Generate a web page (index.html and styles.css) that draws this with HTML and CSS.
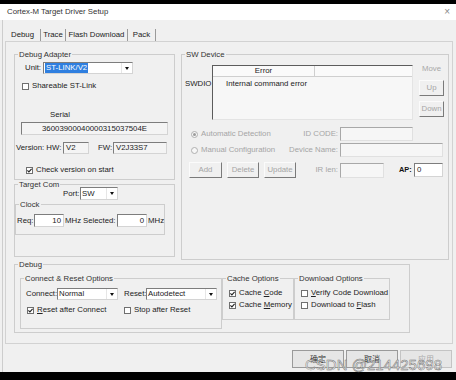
FILE: index.html
```html
<!DOCTYPE html>
<html>
<head>
<meta charset="utf-8">
<title>Cortex-M Target Driver Setup</title>
<link rel="stylesheet" href="styles.css">
</head>
<body>
<div class="dialog">
  <div class="titlebar"><span class="title">Cortex-M Target Driver Setup</span><span class="close">×</span></div>
  <div class="main">
    <div class="tabs">
      <span class="tab t-debug">Debug</span><span class="tab t-trace">Trace</span><span class="tab t-flash">Flash Download</span><span class="tab t-pack">Pack</span>
    </div>
    <div class="panel">
      <div class="toprow">
        <div class="leftcol">
          <fieldset class="grp g-adapter">
            <legend>Debug Adapter</legend>
            <div class="row r-unit">
              <span class="lbl w-unit">Unit:</span>
              <span class="select s-unit"><span class="sel-text"><span class="hl">ST-LINK/V2</span></span><span class="arrow"><span class="tri"></span></span></span>
            </div>
            <div class="row r-share">
              <span class="cb"></span><span class="cbl">Shareable ST-Link</span>
            </div>
            <div class="row r-serlbl">Serial</div>
            <div class="box serial">3600390004000031503750​4E</div>
            <div class="row r-version">
              <span class="lbl w-ver">Version: HW:</span>
              <span class="box ro hw">V2</span>
              <span class="lbl w-fw">FW:</span>
              <span class="box ro fw">V2J33S7</span>
            </div>
            <div class="row r-check">
              <span class="cb"><svg width="5" height="5" viewBox="0 0 5 5"><path d="M0.4 2.4 L1.9 3.9 L4.6 0.8" fill="none" stroke="#222" stroke-width="1.1"/></svg></span><span class="cbl">Check version on start</span>
            </div>
          </fieldset>
          <fieldset class="grp g-target">
            <legend>Target Com</legend>
            <div class="row r-port">
              <span class="lbl w-port">Port:</span>
              <span class="select s-port"><span class="sel-text">SW</span><span class="arrow"><span class="tri"></span></span></span>
            </div>
            <fieldset class="grp g-clock">
              <legend>Clock</legend>
              <div class="row r-req">
                <span class="lbl w-req">Req:</span>
                <span class="box num">10</span>
                <span class="lbl w-mhz">MHz</span>
                <span class="lbl w-sel">Selected:</span>
                <span class="box num">0</span>
                <span class="lbl w-mhz2">MHz</span>
              </div>
            </fieldset>
          </fieldset>
        </div>
        <fieldset class="grp g-sw">
          <legend>SW Device</legend>
          <div class="swtop">
            <div class="swdio">SWDIO</div>
            <div class="tbl">
              <div class="thead"><span class="th th1">Error</span><span class="th th2"></span></div>
              <div class="trow">Internal command error</div>
            </div>
            <div class="movecol">
              <div class="move">Move</div>
              <div class="btn dis b-up">Up</div>
              <div class="btn dis b-down">Down</div>
            </div>
          </div>
          <div class="swrow sw1">
            <div class="swleft"><span class="radio on"></span><span class="dis-t rl">Automatic Detection</span><span class="dis-t rlab">ID CODE:</span></div>
            <span class="box dbox idc"></span>
          </div>
          <div class="swrow sw2">
            <div class="swleft"><span class="radio"></span><span class="dis-t rl">Manual Configuration</span><span class="dis-t rlab">Device Name:</span></div>
            <span class="box dbox devn"></span>
          </div>
          <div class="swrow sw3">
            <div class="swleft sw3left"><span class="btn dis b-add">Add</span><span class="btn dis b-del">Delete</span><span class="btn dis b-upd">Update</span><span class="dis-t rlab">IR len:</span></div>
            <span class="box dbox irl"></span>
            <span class="lbl ap">AP:</span>
            <span class="box apbox">0</span>
          </div>
        </fieldset>
      </div>
      <fieldset class="grp g-debug">
        <legend>Debug</legend>
        <div class="drow">
          <fieldset class="grp g-conn">
            <legend>Connect &amp; Reset Options</legend>
            <div class="row r-conn">
              <span class="lbl w-conn">Connect:</span>
              <span class="select s-conn"><span class="sel-text">Normal</span><span class="arrow"><span class="tri"></span></span></span>
              <span class="lbl w-reset">Reset:</span>
              <span class="select s-reset"><span class="sel-text">Autodetect</span><span class="arrow"><span class="tri"></span></span></span>
            </div>
            <div class="row r-rac">
              <span class="citem w-rac"><span class="cb"><svg width="5" height="5" viewBox="0 0 5 5"><path d="M0.4 2.4 L1.9 3.9 L4.6 0.8" fill="none" stroke="#222" stroke-width="1.1"/></svg></span><span class="cbl"><u>R</u>eset after Connect</span></span>
              <span class="citem"><span class="cb"></span><span class="cbl">Stop after Reset</span></span>
            </div>
          </fieldset>
          <fieldset class="grp g-cache">
            <legend>Cache Options</legend>
            <div class="row r-opt1"><span class="cb"><svg width="5" height="5" viewBox="0 0 5 5"><path d="M0.4 2.4 L1.9 3.9 L4.6 0.8" fill="none" stroke="#222" stroke-width="1.1"/></svg></span><span class="cbl">Cache <u>C</u>ode</span></div>
            <div class="row r-opt2"><span class="cb"><svg width="5" height="5" viewBox="0 0 5 5"><path d="M0.4 2.4 L1.9 3.9 L4.6 0.8" fill="none" stroke="#222" stroke-width="1.1"/></svg></span><span class="cbl">Cache <u>M</u>emory</span></div>
          </fieldset>
          <fieldset class="grp g-dl">
            <legend>Download Options</legend>
            <div class="row r-opt1"><span class="cb"></span><span class="cbl"><u>V</u>erify Code Download</span></div>
            <div class="row r-opt2"><span class="cb"></span><span class="cbl">Download to <u>F</u>lash</span></div>
          </fieldset>
        </div>
      </fieldset>
    </div>
    <div class="footer">
      <span class="fbtn">确定</span><span class="fbtn">取消</span><span class="fbtn fdis">应用</span>
    </div>
  </div>
</div>
<div class="watermark">CSDN @214425698</div>
</body>
</html>
```

FILE: styles.css
```css
* { box-sizing: border-box; }
html, body { margin: 0; padding: 0; }
body {
  width: 456px; height: 380px; background: #000; position: relative; overflow: hidden;
  font-family: "Liberation Sans", Arial, "Noto Sans CJK SC", sans-serif;
  font-size: 7.8px; line-height: 10px; color: #222;
}
.dialog { margin-top: 4px; height: 368px; background: #f0f0f0; display: flex; flex-direction: column; }
.titlebar { height: 16px; background: #fff; display: flex; align-items: center; justify-content: space-between; padding: 0 6px 0 7px; }
.title { font-size: 7.8px; color: #333; }
.close { font-size: 10px; color: #888; line-height: 10px; }
.main { flex: 1; margin-left: 2px; border-left: 1px solid #cdcdcd; padding: 9px 4px 0 0; display: flex; flex-direction: column; }

.tabs { display: flex; height: 12px; margin-left: 2px; }
.tab { display: flex; align-items: center; justify-content: center; border-right: 1px solid #9a9a9a; height: 12px; }
.t-debug { width: 36px; }
.t-trace { width: 25px; }
.t-flash { width: 62px; }
.t-pack { width: 28px; }

.panel { margin-left: 2px; width: 448px; height: 303px; border: 1px solid #d2d2d2; padding: 8px 3px 0 8px; }
.toprow { display: flex; gap: 6px; height: 210px; }
.leftcol { width: 161px; display: flex; flex-direction: column; }

fieldset.grp { margin: 0; padding: 0; border: 1px solid #cdcdcd; min-width: 0; }
legend { padding: 0 1px; margin-left: 3px; font-size: 7.8px; line-height: 9px; color: #333; }

.row { display: flex; align-items: center; white-space: nowrap; }
.lbl { white-space: nowrap; flex: none; }
.box { display: inline-flex; align-items: center; background: #fff; border: 1px solid; border-color: #7d7d7d #d4d4d4 #d4d4d4 #7d7d7d; flex: none; white-space: nowrap; }
.box.ro { background: #f4f4f4; padding-left: 2px; }
.select { display: inline-flex; height: 12px; background: #fff; border: 1px solid; border-color: #7d7d7d #d4d4d4 #d4d4d4 #7d7d7d; flex: none; }
.sel-text { flex: 1; display: flex; align-items: center; padding-left: 1px; overflow: hidden; }
.hl { background: #2f7fe0; color: #fff; padding: 0 1px; line-height: 10px; }
.arrow { width: 11px; display: flex; align-items: center; justify-content: center; border-left: 1px solid #e6e6e6; }
.tri { width: 0; height: 0; border-left: 2.5px solid transparent; border-right: 2.5px solid transparent; border-top: 3px solid #111; }

.cb { width: 7px; height: 7px; border: 1px solid #6f6f6f; background: #fff; display: inline-flex; align-items: center; justify-content: center; flex: none; }
.cb svg { display: block; }
.cbl { margin-left: 3px; white-space: nowrap; }

.g-adapter { height: 130px; }
.r-unit { margin-top: 3px; height: 12px; padding-left: 10px; }
.w-unit { width: 18px; }
.s-unit { width: 90px; }
.r-share { margin-top: 7px; height: 10px; padding-left: 7px; }
.r-serlbl { margin-top: 19px; height: 10px; padding-left: 35px; }
.serial { margin-top: 2px; margin-left: 6px; width: 147px; height: 13px; justify-content: center; background: #f4f4f4; }
.r-version { margin-top: 7px; height: 12px; padding-left: 1px; }
.w-ver { width: 47px; }
.hw { width: 26px; height: 12px; }
.w-fw { width: 15px; margin-left: 9px; }
.fw { width: 54px; height: 12px; }
.r-check { margin-top: 11px; height: 10px; padding-left: 11px; }

.g-target { margin-top: 3px; height: 77px; }
.r-port { margin-top: -2px; height: 13px; padding-left: 48px; }
.w-port { width: 17px; }
.s-port { width: 38px; height: 13px; }
.g-clock { margin-top: 1px; margin-left: 5px; width: 150px; height: 35px; }
.r-req { margin-top: 5px; height: 13px; padding-left: 1px; }
.w-req { width: 17px; }
.box.num { width: 30px; height: 13px; justify-content: flex-end; padding-right: 2px; }
.w-mhz { width: 18px; margin-left: 1px; }
.w-sel { width: 34px; }
.w-mhz2 { margin-left: 1px; }

.g-sw { width: 268px; height: 210px; }
.swtop { display: flex; margin-top: 6px; height: 55px; }
.swdio { width: 30px; padding-left: 3px; padding-top: 14px; }
.tbl { width: 201px; height: 55px; background: #f7f7f7; border: 1px solid; border-color: #5c5c5c #e4e4e4 #e4e4e4 #5c5c5c; }
.thead { display: flex; height: 11px; border-bottom: 1px solid #cfcfcf; background: #fafafa; }
.th { display: flex; align-items: center; justify-content: center; }
.th1 { width: 102px; border-right: 1px solid #cfcfcf; }
.th2 { flex: 1; }
.trow { margin-top: 2px; padding-left: 13px; }
.movecol { margin-left: 6px; width: 25px; display: flex; flex-direction: column; }
.move { margin-top: -1px; height: 10px; text-align: center; color: #a8a8a8; }
.btn { display: flex; align-items: center; justify-content: center; background: #f0f0f0; border: 1px solid; border-color: #fbfbfb #7a7a7a #7a7a7a #fbfbfb; flex: none; }
.dis, .dis-t { color: #a5a5a5; }
.b-up { margin-top: 6px; height: 16px; }
.b-down { margin-top: 5px; height: 16px; }

.swrow { display: flex; align-items: center; white-space: nowrap; }
.swleft { width: 158px; display: flex; align-items: center; padding-left: 9px; flex: none; }
.rlab { margin-left: auto; padding-right: 2px; }
.rl { margin-left: 3px; }
.radio { width: 7px; height: 7px; border-radius: 50%; border: 1px solid #b0b0b0; background: #f7f7f7; display: inline-flex; align-items: center; justify-content: center; flex: none; }
.radio.on::before { content: ""; width: 3px; height: 3px; border-radius: 50%; background: #9c9c9c; }
.dbox { background: #f6f6f6; border-color: #a8a8a8 #e0e0e0 #e0e0e0 #a8a8a8; }
.sw1 { margin-top: 7px; height: 14px; }
.idc { width: 73px; height: 14px; }
.sw2 { margin-top: 2px; height: 14px; }
.devn { width: 103px; height: 14px; }
.sw3 { margin-top: 5px; height: 16px; }
.sw3left { padding-left: 7px; }
.sw3left .btn { height: 16px; margin-right: 5px; }
.b-add { width: 33px; }
.b-del { width: 32px; }
.b-upd { width: 32px; }
.irl { width: 44px; height: 15px; }
.ap { margin-left: 15px; width: 15px; color: #111; font-weight: bold; font-size: 7.4px; }
.apbox { width: 29px; height: 14px; padding-left: 2px; }

.g-debug { margin-top: 4px; width: 396px; height: 73px; }
.drow { display: flex; align-items: flex-start; margin-top: 5px; padding-left: 5px; }
.g-conn { width: 202px; height: 55px; }
.r-conn { margin-top: 5px; height: 12px; padding-left: 5px; }
.w-conn { width: 31px; }
.s-conn { width: 61px; }
.w-reset { width: 22px; margin-left: 6px; }
.s-reset { width: 71px; }
.r-rac { margin-top: 5px; height: 10px; padding-left: 6px; }
.citem { display: flex; align-items: center; }
.w-rac { width: 97px; }
.g-cache { margin-left: 8px; width: 72px; height: 46px; }
.g-dl { margin-left: 6px; width: 96px; height: 46px; overflow: hidden; }
.r-opt1 { margin-top: 5px; height: 10px; padding-left: 6px; }
.r-opt2 { margin-top: 2px; height: 10px; padding-left: 6px; }
.g-dl .row { overflow: hidden; }

.footer { display: flex; justify-content: flex-end; gap: 2px; margin-top: 6px; }
.fbtn { width: 52px; height: 18px; display: flex; align-items: center; justify-content: center; background: #e6e6e6; border: 1px solid #9a9a9a; font-family: "Noto Sans CJK SC", sans-serif; font-size: 8px; color: #333; }
.fdis { color: #aaa; border-color: #c4c4c4; }

.watermark { position: absolute; left: 305px; top: 357px; font-family: "Liberation Sans", Arial, sans-serif; font-size: 15px; line-height: 15px; color: rgba(255,255,255,0.85); -webkit-text-stroke: 0.5px #707070; white-space: nowrap; }
```
